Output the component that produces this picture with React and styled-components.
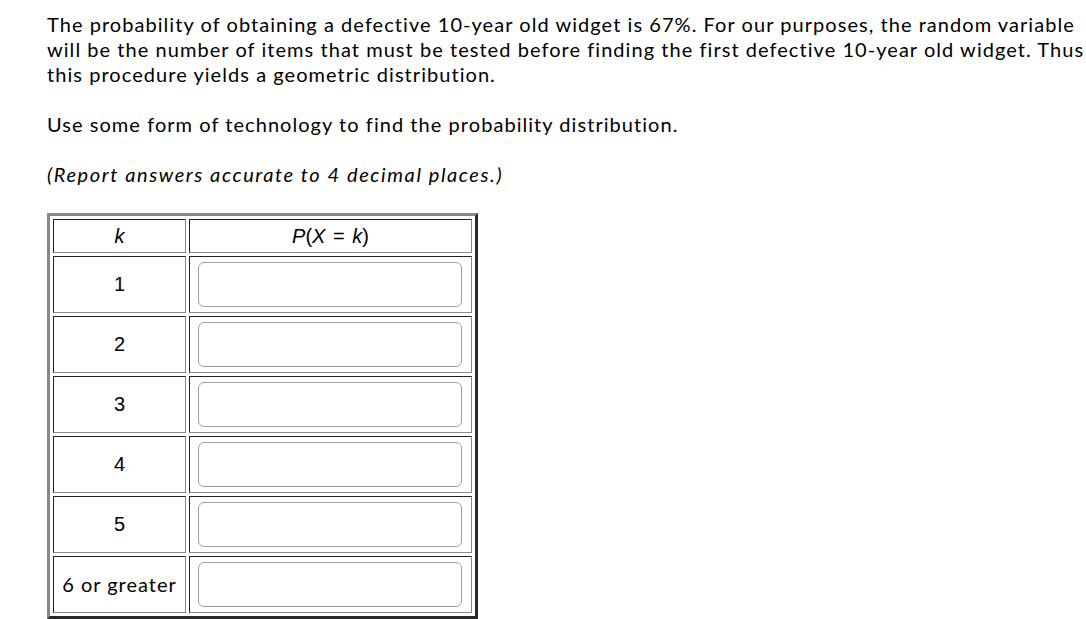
import styled, { createGlobalStyle } from "styled-components";

const GlobalStyle = createGlobalStyle`
  html, body {
    margin: 0;
    padding: 0;
    background: #fff;
    overflow: hidden;
  }
`;

const rows = ["1", "2", "3", "4", "5", "6 or greater"];

export default function App() {
  return (
    <>
      <GlobalStyle />
      <Page>
        <Para>
          The probability of obtaining a defective 10-year old widget is 67%. For our purposes, the random variable
          <br />
          will be the number of items that must be tested before finding the first defective 10-year old widget. Thus
          <br />
          this procedure yields a geometric distribution.
        </Para>
        <Para>Use some form of technology to find the probability distribution.</Para>
        <Para>
          <em>(Report answers accurate to 4 decimal places.)</em>
        </Para>
        <Table>
          <thead>
            <tr>
              <HeadCell $w={131}>
                <i>k</i>
              </HeadCell>
              <HeadCell $w={281}>
                <i>P</i>(<i>X</i> = <i>k</i>)
              </HeadCell>
            </tr>
          </thead>
          <tbody>
            {rows.map((k) => (
              <tr key={k}>
                <KCell $text={k.length > 1}>{k}</KCell>
                <InputCell>
                  <AnswerInput type="text" aria-label={`P(X = ${k})`} />
                </InputCell>
              </tr>
            ))}
          </tbody>
        </Table>
      </Page>
    </>
  );
}

const Page = styled.div`
  padding: 12px 0 0 47px;
  font-family: Lato, "Liberation Sans", sans-serif;
  font-size: 20px;
  line-height: 25px;
  letter-spacing: 1.05px;
  color: #000;
`;

const Para = styled.p`
  margin: 0 0 25px;
  white-space: nowrap;

  em {
    font-style: italic;
    letter-spacing: 1.6px;
  }
`;

const Table = styled.table`
  border: 3px solid;
  border-color: #888 #2b2b2b #2b2b2b #888;
  border-spacing: 3px;
  margin-top: 26px;
  letter-spacing: normal;
`;

const Cell = styled.td`
  border: 1px solid;
  border-color: #222 #888 #888 #222;
  text-align: center;
  vertical-align: middle;
  padding: 0;
`;

const HeadCell = styled(Cell).attrs({ as: "th" })`
  width: ${({ $w }) => $w}px;
  height: 32px;
  font-family: "Liberation Sans", Arial, sans-serif;
  font-weight: normal;
  font-size: 20px;
  line-height: 24px;
  word-spacing: 2px;
`;

const KCell = styled(Cell)`
  height: 55px;
  font-family: ${({ $text }) =>
    $text ? 'Lato, "Liberation Sans", sans-serif' : '"Liberation Sans", Arial, sans-serif'};
  font-size: 20px;
  letter-spacing: ${({ $text }) => ($text ? "1px" : "normal")};
`;

const InputCell = styled(Cell)`
  padding: 5px 8px;
`;

const AnswerInput = styled.input`
  display: block;
  box-sizing: border-box;
  width: 264px;
  height: 45px;
  margin: 0;
  border: 1px solid #a0a0a0;
  border-radius: 6px;
  background: #fff;
  outline: none;
  font-size: 18px;
`;
